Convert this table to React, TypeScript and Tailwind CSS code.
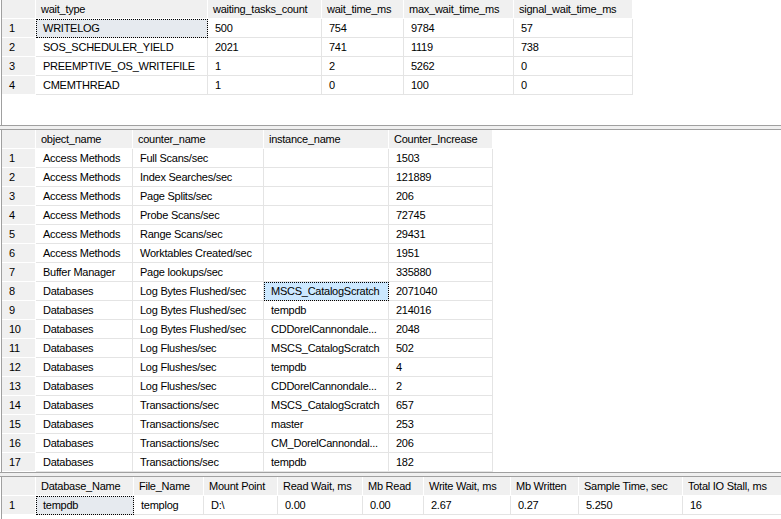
import React from "react";

type Sel = "none" | "blur" | "focus";

function Cell({
  children,
  kind,
  sel = "none",
}: {
  children?: React.ReactNode;
  kind: "head" | "num" | "data";
  sel?: Sel;
}) {
  const base =
    "flex items-center h-[19px] border-r border-b whitespace-nowrap overflow-hidden";
  let cls = "";
  if (kind === "head") cls = "bg-[#f0f0f0] border-white pl-[5px]";
  else if (kind === "num") cls = "bg-[#f0f0f0] border-white pl-[7px]";
  else cls = "bg-white border-[#e4e4e4] pl-[7px]";
  if (sel === "blur")
    cls =
      "bg-[#e6eaef] border-[#e4e4e4] pl-[7px] outline-1 outline-dotted outline-black -outline-offset-1";
  if (sel === "focus")
    cls =
      "bg-[#cce8ff] border-[#e4e4e4] pl-[7px] outline-1 outline-dotted outline-black -outline-offset-1";
  return <div className={`${base} ${cls}`}>{children}</div>;
}

const g1Head = ["wait_type", "waiting_tasks_count", "wait_time_ms", "max_wait_time_ms", "signal_wait_time_ms"];
const g1Rows = [
  ["WRITELOG", "500", "754", "9784", "57"],
  ["SOS_SCHEDULER_YIELD", "2021", "741", "1119", "738"],
  ["PREEMPTIVE_OS_WRITEFILE", "1", "2", "5262", "0"],
  ["CMEMTHREAD", "1", "0", "100", "0"],
];

const g2Head = ["object_name", "counter_name", "instance_name", "Counter_Increase"];
const g2Rows = [
  ["Access Methods", "Full Scans/sec", "", "1503"],
  ["Access Methods", "Index Searches/sec", "", "121889"],
  ["Access Methods", "Page Splits/sec", "", "206"],
  ["Access Methods", "Probe Scans/sec", "", "72745"],
  ["Access Methods", "Range Scans/sec", "", "29431"],
  ["Access Methods", "Worktables Created/sec", "", "1951"],
  ["Buffer Manager", "Page lookups/sec", "", "335880"],
  ["Databases", "Log Bytes Flushed/sec", "MSCS_CatalogScratch", "2071040"],
  ["Databases", "Log Bytes Flushed/sec", "tempdb", "214016"],
  ["Databases", "Log Bytes Flushed/sec", "CDDorelCannondale...", "2048"],
  ["Databases", "Log Flushes/sec", "MSCS_CatalogScratch", "502"],
  ["Databases", "Log Flushes/sec", "tempdb", "4"],
  ["Databases", "Log Flushes/sec", "CDDorelCannondale...", "2"],
  ["Databases", "Transactions/sec", "MSCS_CatalogScratch", "657"],
  ["Databases", "Transactions/sec", "master", "253"],
  ["Databases", "Transactions/sec", "CM_DorelCannondal...", "206"],
  ["Databases", "Transactions/sec", "tempdb", "182"],
];

const g3Head = [
  "Database_Name",
  "File_Name",
  "Mount Point",
  "Read Wait, ms",
  "Mb Read",
  "Write Wait, ms",
  "Mb Written",
  "Sample Time, sec",
  "Total IO Stall, ms",
];
const g3Rows = [["tempdb", "templog", "D:\\", "0.00", "0.00", "2.67", "0.27", "5.250", "16"]];

function Splitter() {
  return <div className="h-[5px] shrink-0 bg-[#f0f0f0] border-y border-[#a0a0a0]" />;
}

export default function App() {
  return (
    <div
      className="w-[781px] h-[519px] overflow-hidden bg-white flex flex-col text-[11px] tracking-[-0.25px] text-black"
      style={{ fontFamily: '"Liberation Sans", Arial, sans-serif' }}
    >
      {/* Grid 1 */}
      <div className="h-[125px] shrink-0 ml-px border-l border-[#a0a0a0] overflow-hidden">
        <div className="grid grid-cols-[34px_172px_114px_82px_110px_119px] w-max">
          <Cell kind="head" />
          {g1Head.map((h) => (
            <Cell key={h} kind="head">
              {h}
            </Cell>
          ))}
          {g1Rows.map((r, i) => (
            <React.Fragment key={i}>
              <Cell kind="num">{i + 1}</Cell>
              {r.map((v, j) => (
                <Cell key={j} kind="data" sel={i === 0 && j === 0 ? "blur" : "none"}>
                  {v}
                </Cell>
              ))}
            </React.Fragment>
          ))}
        </div>
      </div>
      <Splitter />
      {/* Grid 2 */}
      <div className="h-[342px] shrink-0 ml-px border-l border-[#a0a0a0] overflow-hidden">
        <div className="grid grid-cols-[34px_97px_131px_125px_104px] w-max">
          <Cell kind="head" />
          {g2Head.map((h) => (
            <Cell key={h} kind="head">
              {h}
            </Cell>
          ))}
          {g2Rows.map((r, i) => (
            <React.Fragment key={i}>
              <Cell kind="num">{i + 1}</Cell>
              {r.map((v, j) => (
                <Cell key={j} kind="data" sel={i === 7 && j === 2 ? "focus" : "none"}>
                  {v}
                </Cell>
              ))}
            </React.Fragment>
          ))}
        </div>
      </div>
      <Splitter />
      {/* Grid 3 */}
      <div className="flex-1 ml-px border-l border-[#a0a0a0] overflow-hidden">
        <div className="grid grid-cols-[34px_98px_70px_74px_85px_61px_87px_68px_104px_110px] w-max">
          <Cell kind="head" />
          {g3Head.map((h) => (
            <Cell key={h} kind="head">
              {h}
            </Cell>
          ))}
          {g3Rows.map((r, i) => (
            <React.Fragment key={i}>
              <Cell kind="num">{i + 1}</Cell>
              {r.map((v, j) => (
                <Cell key={j} kind="data" sel={i === 0 && j === 0 ? "blur" : "none"}>
                  {v}
                </Cell>
              ))}
            </React.Fragment>
          ))}
        </div>
      </div>
    </div>
  );
}
